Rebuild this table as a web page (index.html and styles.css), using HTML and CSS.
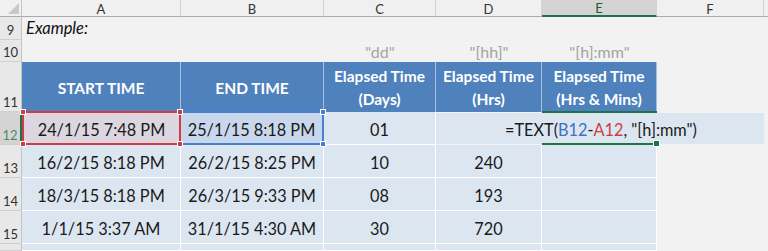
FILE: index.html
```html
<!DOCTYPE html>
<html>
<head>
<meta charset="utf-8">
<link rel="stylesheet" href="styles.css">
</head>
<body>
<div class="sheet">
  <div class="corner"><svg width="22" height="17" viewBox="0 0 22 17"><polygon points="19,3 19,14 8,14" fill="#c8c8c8"/></svg></div>
  <div class="colhead">A</div>
  <div class="colhead">B</div>
  <div class="colhead">C</div>
  <div class="colhead">D</div>
  <div class="colhead active">E</div>
  <div class="colhead">F</div>
  <div class="colhead last"></div>

  <div class="rowhead">9</div>
  <div class="note">Example:</div>

  <div class="rowhead">10</div>
  <div class="blank"></div>
  <div class="blank"></div>
  <div class="fmt">"dd"</div>
  <div class="fmt">"[hh]"</div>
  <div class="fmt">"[h]:mm"</div>
  <div class="blank"></div>
  <div class="blank"></div>

  <div class="rowhead">11</div>
  <div class="th">START TIME</div>
  <div class="th">END TIME</div>
  <div class="th">Elapsed Time<br>(Days)</div>
  <div class="th">Elapsed Time<br>(Hrs)</div>
  <div class="th">Elapsed Time<br>(Hrs &amp; Mins)</div>
  <div class="blank"></div>
  <div class="blank"></div>

  <div class="rowhead current">12</div>
  <div class="td ref-a">24/1/15 7:48 PM<span class="h tl"></span><span class="h tr"></span><span class="h bl"></span><span class="h br"></span></div>
  <div class="td ref-b">25/1/15 8:18 PM<span class="h tr"></span><span class="h br"></span></div>
  <div class="td">01</div>
  <div class="editor">=TEXT(<span class="rb">B12</span>-<span class="ra">A12</span>, "[h]:mm")</div>
  <div class="blank"></div>
  <div class="active-cell"></div>

  <div class="rowhead">13</div>
  <div class="td">16/2/15 8:18 PM</div>
  <div class="td">26/2/15 8:25 PM</div>
  <div class="td">10</div>
  <div class="td">240</div>
  <div class="td"></div>
  <div class="blank"></div>
  <div class="blank"></div>

  <div class="rowhead">14</div>
  <div class="td">18/3/15 8:18 PM</div>
  <div class="td">26/3/15 9:33 PM</div>
  <div class="td">08</div>
  <div class="td">193</div>
  <div class="td"></div>
  <div class="blank"></div>
  <div class="blank"></div>

  <div class="rowhead">15</div>
  <div class="td">1/1/15 3:37 AM</div>
  <div class="td">31/1/15 4:30 AM</div>
  <div class="td">30</div>
  <div class="td">720</div>
  <div class="td"></div>
  <div class="blank"></div>
  <div class="blank"></div>

  <div class="rowhead"></div>
  <div class="td"></div>
  <div class="td"></div>
  <div class="td"></div>
  <div class="td"></div>
  <div class="td"></div>
  <div class="blank"></div>
  <div class="blank"></div>
</div>
</body>
</html>
```

FILE: styles.css
```css
* { box-sizing: border-box; }
html, body { margin: 0; padding: 0; }
body {
  width: 768px;
  height: 251px;
  overflow: hidden;
  background: #f2f2f2;
  font-family: Lato, "Liberation Sans", sans-serif;
  color: #1a1a1a;
}
.sheet {
  display: grid;
  grid-template-columns: 22px 159px 143px 112px 106px 115px 107px 1fr;
  grid-template-rows: 17px 23px 22px 50px 33px 33px 33px 33px 1fr;
  width: 768px;
  height: 251px;
}
.corner {
  background: #f0f0f0;
  border-right: 1px solid #c6c6c6;
  border-bottom: 1px solid #ababab;
}
.corner svg { display: block; }
.colhead {
  background: #f0f0f0;
  border-right: 1px solid #d4d4d4;
  border-bottom: 1px solid #ababab;
  font-size: 13px;
  color: #333;
  display: flex;
  align-items: center;
  justify-content: center;
  padding-top: 1px;
}
.colhead.active {
  background: #d4d4d4;
  border-bottom: 2px solid #217346;
  color: #1d5a38;
}
.colhead.last { border-right: none; }
.rowhead {
  background: #e8e8e8;
  border-right: 1px solid #c4c4c4;
  border-bottom: 1px solid #d0d0d0;
  font-size: 13px;
  color: #333;
  display: flex;
  align-items: flex-end;
  justify-content: center;
  padding-bottom: 1px;
}
.rowhead.current {
  background: #d4d4d4;
  border-right: 2px solid #217346;
  color: #4d8a6a;
}
.note {
  grid-column: 2 / 9;
  font-style: italic;
  font-size: 16.5px;
  color: #111;
  display: flex;
  align-items: flex-end;
  padding-left: 4px;
  padding-bottom: 2px;
}
.fmt {
  font-size: 16px;
  color: #a3a3a3;
  display: flex;
  align-items: center;
  justify-content: center;
  padding-top: 1px;
}
.th {
  background: #4f81bd;
  color: #fff;
  font-weight: bold;
  font-size: 15.5px;
  line-height: 23px;
  text-align: center;
  border-right: 1px solid #a7bfdd;
  display: flex;
  align-items: center;
  justify-content: center;
  padding-top: 2px;
}
.td {
  position: relative;
  background: #dce6f1;
  border-right: 1px solid #fff;
  border-bottom: 1px solid #fff;
  font-size: 16.3px;
  color: #1a1a1a;
  display: flex;
  align-items: center;
  justify-content: center;
  padding-top: 2px;
}
.td.ref-a {
  background: #ddd6e0;
  border: 2px solid #cf3c43;
  margin-top: -1px;
}
.td.ref-b {
  background: #c8d7ec;
  border: 2px solid #4a7fd0;
  border-left: none;
  margin-top: -1px;
}
.h {
  position: absolute;
  width: 6px;
  height: 6px;
  border: 1px solid #fff;
  z-index: 4;
}
.ref-a .h { background: #cf3c43; }
.ref-b .h { background: #4a7fd0; }
.h.tl { top: -4px; left: -4px; }
.h.tr { top: -4px; right: -4px; }
.h.bl { bottom: -4px; left: -4px; }
.h.br { bottom: -4px; right: -4px; }
.editor {
  grid-column: 5 / 8;
  grid-row: 5;
  background: #dce6f1;
  font-size: 16.3px;
  color: #1a1a1a;
  display: flex;
  align-items: center;
  justify-content: center;
  padding-top: 1px;
  padding-left: 2px;
  margin-top: 1px;
  margin-bottom: 1px;
  z-index: 1;
}
.rb { color: #3d72c4; }
.ra { color: #cc3d40; }
.active-cell {
  grid-column: 6;
  grid-row: 5;
  margin-top: -1px;
  border-top: 2px solid #217346;
  border-bottom: 2px solid #217346;
  position: relative;
  z-index: 3;
}
.active-cell::after {
  content: "";
  position: absolute;
  right: -3px;
  bottom: -4px;
  width: 5px;
  height: 5px;
  background: #217346;
  border: 1px solid #fff;
}
```
